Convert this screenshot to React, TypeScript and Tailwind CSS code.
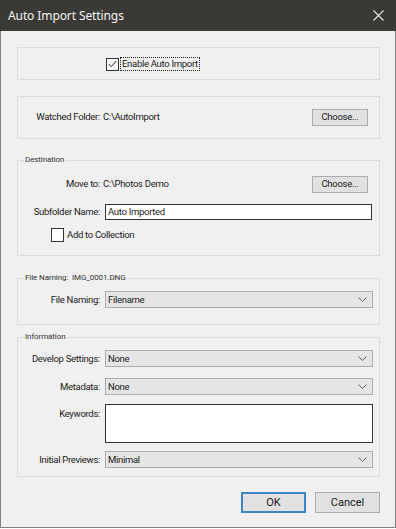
import React from "react";

const font = "font-['Roboto',sans-serif]";

function Chevron() {
  return (
    <svg width="9" height="5" viewBox="0 0 9 5" className="shrink-0">
      <path d="M0.5 0.5L4.5 4.5L8.5 0.5" fill="none" stroke="#606060" strokeWidth="1" />
    </svg>
  );
}

function Label({ children }: { children: React.ReactNode }) {
  return <span className="w-[82px] shrink-0 text-right">{children}</span>;
}

function Select({ value }: { value: string }) {
  return (
    <div className="ml-[5px] flex h-[17px] w-[268px] items-center justify-between border border-[#adadad] bg-[#e5e5e5] pl-[2px] pr-[5px]">
      <span>{value}</span>
      <Chevron />
    </div>
  );
}

function ChooseButton() {
  return (
    <div className="flex h-[17px] w-[56px] items-center justify-center border border-[#adadad] bg-[#e1e1e1]">
      Choose...
    </div>
  );
}

function Legend({ children }: { children: React.ReactNode }) {
  return (
    <legend className="ml-[6px] px-[1px] text-[8px] leading-[10px] tracking-[-0.1px] text-[#333]">
      {children}
    </legend>
  );
}

export default function App() {
  return (
    <div
      className={`${font} flex h-[528px] w-[396px] flex-col border-x border-b border-[#808080] bg-[#f0f0f0] text-[9.5px] tracking-[-0.3px] text-[#1a1a1a]`}
    >
      {/* title bar */}
      <div className="-mx-px flex h-[31px] shrink-0 items-center justify-between bg-[#3b3936] pl-[8px] pr-[12px]">
        <span className="font-['Noto_Sans',sans-serif] text-[12px] tracking-[-0.1px] text-[#f2f2f2]">
          Auto Import Settings
        </span>
        <svg width="11" height="11" viewBox="0 0 11 11">
          <path d="M0.5 0.5L10.5 10.5M10.5 0.5L0.5 10.5" stroke="#e6e6e6" strokeWidth="1.1" />
        </svg>
      </div>

      {/* enable */}
      <div className="ml-[16px] mt-[16px] flex h-[33px] w-[363px] items-center border border-[#dcdcdc] pl-[88px] pt-[1px]">
        <div className="flex h-[13px] w-[13px] items-center justify-center border border-[#333] bg-[#f7f7f7]">
          <svg width="9" height="8" viewBox="0 0 9 8">
            <path d="M0.8 4.2L3.2 6.6L8.2 1" fill="none" stroke="#222" strokeWidth="1" />
          </svg>
        </div>
        <span className="ml-[1px] border border-dotted border-[#222] px-[1px] leading-[12px]">
          Enable Auto Import
        </span>
      </div>

      {/* watched folder */}
      <div className="ml-[16px] mt-[16px] flex h-[43px] w-[363px] items-center border border-[#dcdcdc] pr-[11px]">
        <Label>Watched Folder:</Label>
        <span className="ml-[3px] flex-1">C:\AutoImport</span>
        <ChooseButton />
      </div>

      {/* destination */}
      <fieldset className="ml-[16px] mt-[16px] w-[363px] border border-[#dcdcdc] pb-[13px]">
        <Legend>Destination</Legend>
        <div className="mt-[11px] flex items-center pr-[11px]">
          <Label>Move to:</Label>
          <span className="ml-[3px] flex-1">C:\Photos Demo</span>
          <ChooseButton />
        </div>
        <div className="mt-[11px] flex items-center">
          <Label>Subfolder Name:</Label>
          <div className="ml-[5px] flex h-[16px] w-[267px] items-center border border-[#333] bg-white pl-[2px]">
            Auto Imported
          </div>
        </div>
        <div className="ml-[33px] mt-[8px] flex items-center">
          <div className="h-[14px] w-[13px] border border-[#333] bg-white" />
          <span className="ml-[3px]">Add to Collection</span>
        </div>
      </fieldset>

      {/* file naming */}
      <fieldset className="ml-[16px] mt-[17px] w-[363px] border border-[#dcdcdc] pb-[16px]">
        <Legend>File Naming:&nbsp; IMG_0001.DNG</Legend>
        <div className="mt-[8px] flex items-center">
          <Label>File Naming:</Label>
          <Select value="Filename" />
        </div>
      </fieldset>

      {/* information */}
      <fieldset className="ml-[16px] mt-[7px] w-[363px] border border-[#dcdcdc] pb-[8px]">
        <Legend>Information</Legend>
        <div className="mt-[8px] flex items-center">
          <Label>Develop Settings:</Label>
          <Select value="None" />
        </div>
        <div className="mt-[11px] flex items-center">
          <Label>Metadata:</Label>
          <Select value="None" />
        </div>
        <div className="mt-[9px] flex items-start">
          <span className="w-[82px] shrink-0 pt-[3px] text-right">Keywords:</span>
          <div className="ml-[5px] h-[39px] w-[268px] border border-[#333] bg-white" />
        </div>
        <div className="mt-[8px] flex items-center">
          <Label>Initial Previews:</Label>
          <Select value="Minimal" />
        </div>
      </fieldset>

      {/* buttons */}
      <div className="mr-[15px] mt-[15px] flex justify-end gap-[9px]">
        <div className="flex h-[21px] w-[65px] items-center justify-center border-2 border-[#3c86c6] bg-[#e1e1e1] text-[11px] tracking-normal">
          OK
        </div>
        <div className="flex h-[21px] w-[65px] items-center justify-center border border-[#adadad] bg-[#e1e1e1] text-[11px] tracking-normal">
          Cancel
        </div>
      </div>
    </div>
  );
}
